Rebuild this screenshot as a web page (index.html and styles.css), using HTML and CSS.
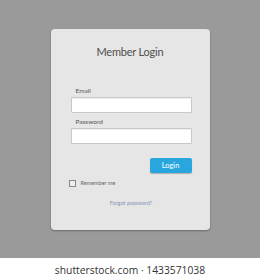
FILE: index.html
```html
<!DOCTYPE html>
<html>
<head>
<meta charset="utf-8">
<link rel="stylesheet" href="styles.css">
</head>
<body>
<div class="stage">
  <div class="card">
    <h1 class="title">Member Login</h1>
    <label class="label label-first">Email</label>
    <div class="input"></div>
    <label class="label">Password</label>
    <div class="input"></div>
    <div class="actions"><button class="btn">Login</button></div>
    <div class="remember"><span class="check"></span><span>Remember me</span></div>
    <div class="forgot">Forgot password?</div>
  </div>
</div>
<div class="footer">shutterstock.com · 1433571038</div>
</body>
</html>
```
FILE: styles.css
```css
html, body { margin: 0; padding: 0; }
body { width: 260px; height: 280px; overflow: hidden; background: #fff; font-family: "Lato", "DejaVu Sans", sans-serif; }
.stage { height: 258px; background: #9a9a9a; display: flex; justify-content: center; align-items: flex-start; padding-top: 29px; box-sizing: border-box; }
.card { width: 159px; height: 201px; flex: none; background: #e6e6e6; border-radius: 4px; box-shadow: 0 1px 2px rgba(0,0,0,0.3); box-sizing: border-box; padding: 15px 18px 0 20px; display: flex; flex-direction: column; }
.title { margin: 0; font-size: 11px; letter-spacing: -0.2px; line-height: 16px; font-weight: 400; color: #4f4f4f; text-align: center; padding-right: 2px; }
.label { display: block; font-size: 6.5px; line-height: 9px; color: #555; padding-left: 5px; margin-top: 4px; margin-bottom: 2px; }
.label-first { margin-top: 26px; }
.input { width: 121px; height: 16px; flex: none; background: #fff; border: 1px solid #c8c8c8; box-sizing: border-box; border-radius: 1px; box-shadow: inset 0 1px 1px rgba(0,0,0,0.06); }
.actions { display: flex; justify-content: flex-end; width: 121px; margin-top: 14px; }
.btn { width: 42px; height: 15px; padding: 0; border: none; border-radius: 2px; background: #2aa6df; color: #fff; font-family: inherit; font-size: 7.5px; line-height: 15px; box-shadow: 0 1px 1px rgba(0,0,0,0.25); }
.remember { display: flex; align-items: center; gap: 5px; margin-top: 6px; font-size: 5.5px; line-height: 8px; color: #666; margin-left: -2px; }
.check { width: 7px; height: 7px; border: 1px solid #888; box-sizing: border-box; background: #eee; }
.forgot { margin-top: 12px; font-size: 5.5px; line-height: 8px; color: #8594b8; text-align: center; width: 121px; }
.footer { height: 22px; line-height: 24px; text-align: center; font-family: "Open Sans", "DejaVu Sans", sans-serif; font-size: 10.3px; color: #333; }
```
